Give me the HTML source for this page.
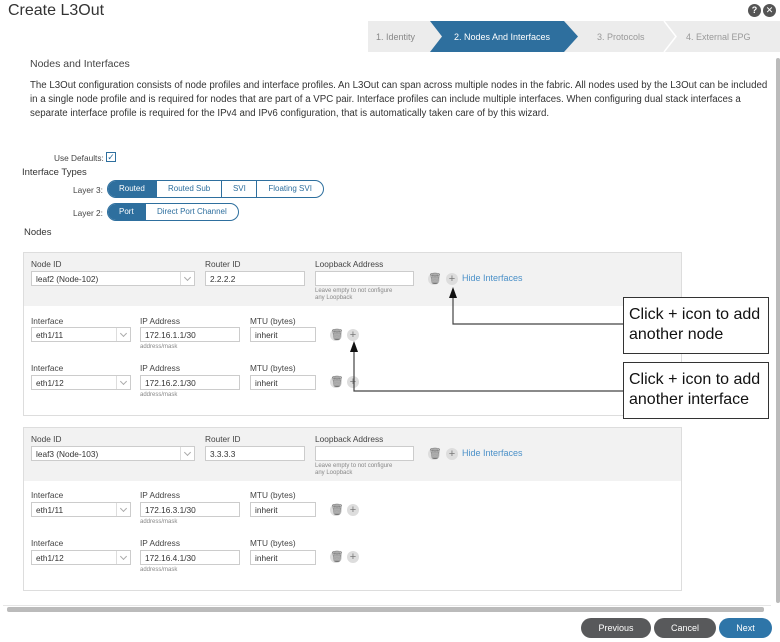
<!DOCTYPE html>
<html><head><meta charset="utf-8"><style>
*{box-sizing:border-box;margin:0;padding:0}
body{width:780px;height:642px;position:relative;background:#fff;font-family:"Liberation Sans",sans-serif;color:#333;overflow:hidden}
.a{position:absolute;white-space:nowrap}
.lbl{font-size:8.3px;color:#444}
.inp{position:absolute;height:15px;border:1px solid #ccc;background:#fff;font-size:8.3px;color:#333;padding:2px 4px;line-height:10px}
.sel:after{content:"";position:absolute;right:0;top:0;width:13px;height:13px;border-left:1px solid #ddd}
.chev{position:absolute;right:4px;top:3px;width:5px;height:5px;border-right:1px solid #aaa;border-bottom:1px solid #aaa;transform:rotate(45deg)}
.hint{font-size:6px;color:#888;line-height:7px}
.ic{position:absolute;width:12px;height:12px;border-radius:50%;background:#ddd;color:#777;font-size:11px;line-height:12px;text-align:center}
.pill{position:absolute;height:18px;border:1px solid #2e6f9e;border-radius:9px;overflow:hidden;display:flex;font-size:8px}
.pill span{border-right:1px solid #2e6f9e;color:#2e6f9e;line-height:16px;text-align:center}
.pill span:last-child{border-right:none}
.pill .on{background:#2e6f9e;color:#fff}
.call{position:absolute;border:1px solid #333;background:#fff;font-size:16px;line-height:20px;padding:7px 5px;color:#111}
.btn{position:absolute;top:618px;height:20px;border-radius:10px;color:#fff;font-size:9px;text-align:center;line-height:20px}
</style></head><body>
<div class="a" style="left:8px;top:2px;font-size:16px;color:#333">Create L3Out</div>
<div class="a" style="left:748px;top:4px;width:13px;height:13px;border-radius:50%;background:#555;color:#fff;font-size:9px;text-align:center;line-height:13px;font-weight:bold">?</div>
<div class="a" style="left:763px;top:4px;width:13px;height:13px;border-radius:50%;background:#555;color:#fff;font-size:9px;text-align:center;line-height:13px">✕</div>
<svg class="a" style="left:368px;top:21px" width="412" height="32">
<polygon points="0,0 412,0 412,31 0,31" fill="#ececec"/>
<polygon points="62,0 196,0 210,15.5 196,31 62,31 74,15.5" fill="#2e6f9e"/>
<polyline points="296,0 308,15.5 296,31" fill="none" stroke="#fff" stroke-width="1.5"/>
<text x="8" y="19" font-size="9" fill="#888" font-family="Liberation Sans">1. Identity</text>
<text x="86" y="19" font-size="9" fill="#fff" font-family="Liberation Sans">2. Nodes And Interfaces</text>
<text x="229" y="19" font-size="9" fill="#999" font-family="Liberation Sans">3. Protocols</text>
<text x="318" y="19" font-size="9" fill="#999" font-family="Liberation Sans">4. External EPG</text>
</svg>
<div class="a" style="left:30px;top:58px;font-size:10.5px;color:#444">Nodes and Interfaces</div>
<div class="a" style="left:30px;top:79px;font-size:9.7px;line-height:14px;color:#333">The L3Out configuration consists of node profiles and interface profiles. An L3Out can span across multiple nodes in the fabric. All nodes used by the L3Out can be included<br>in a single node profile and is required for nodes that are part of a VPC pair. Interface profiles can include multiple interfaces. When configuring dual stack interfaces a<br>separate interface profile is required for the IPv4 and IPv6 configuration, that is automatically taken care of by this wizard.</div>
<div class="a" style="left:776px;top:58px;width:4px;height:545px;background:#bbb;border-radius:2px"></div>
<div class="a lbl" style="left:54px;top:153px">Use Defaults:</div>
<div class="a" style="left:106px;top:152px;width:10px;height:10px;border:1px solid #2e6f9e;color:#2e6f9e;font-size:9px;line-height:8px;text-align:center">✓</div>
<div class="a" style="left:22px;top:167px;font-size:9.5px;color:#333">Interface Types</div>
<div class="a lbl" style="left:73px;top:185px">Layer 3:</div>
<div class="pill" style="left:107px;top:180px;width:217px"><span class="on" style="width:49px">Routed</span><span style="width:66px">Routed Sub</span><span style="width:35px">SVI</span><span style="width:66px">Floating SVI</span></div>
<div class="a lbl" style="left:73px;top:208px">Layer 2:</div>
<div class="pill" style="left:107px;top:203px;width:132px"><span class="on" style="width:38px">Port</span><span style="width:93px">Direct Port Channel</span></div>
<div class="a" style="left:24px;top:227px;font-size:9.5px;color:#333">Nodes</div>

<div class="a" style="left:23px;top:252px;width:659px;height:164px;border:1px solid #ddd"></div>
<div class="a" style="left:24px;top:253px;width:657px;height:53px;background:#f2f2f2"></div>
<div class="a lbl" style="left:31px;top:259px">Node ID</div>
<div class="inp sel" style="left:31px;top:271px;width:164px">leaf2 (Node-102)<i class="chev"></i></div>
<div class="a lbl" style="left:205px;top:259px">Router ID</div>
<div class="inp" style="left:205px;top:271px;width:100px">2.2.2.2</div>
<div class="a lbl" style="left:315px;top:259px">Loopback Address</div>
<div class="inp" style="left:315px;top:271px;width:99px"></div>
<div class="a hint" style="left:315px;top:288px">Leave empty to not configure<br>any Loopback</div>
<div class="ic" style="left:428px;top:273px">🗑</div>
<div class="ic" style="left:446px;top:273px">+</div>
<div class="a" style="left:462px;top:273px;font-size:9px;color:#4a90c8">Hide Interfaces</div>

<div class="a lbl" style="left:31px;top:316px">Interface</div>
<div class="inp sel" style="left:31px;top:327px;width:100px">eth1/11<i class="chev"></i></div>
<div class="a lbl" style="left:140px;top:316px">IP Address</div>
<div class="inp" style="left:140px;top:327px;width:100px">172.16.1.1/30</div>
<div class="a hint" style="left:140px;top:344px">address/mask</div>
<div class="a lbl" style="left:250px;top:316px">MTU (bytes)</div>
<div class="inp" style="left:250px;top:327px;width:66px">inherit</div>
<div class="ic" style="left:330px;top:329px">🗑</div>
<div class="ic" style="left:347px;top:329px">+</div>

<div class="a lbl" style="left:31px;top:363px">Interface</div>
<div class="inp sel" style="left:31px;top:375px;width:100px">eth1/12<i class="chev"></i></div>
<div class="a lbl" style="left:140px;top:363px">IP Address</div>
<div class="inp" style="left:140px;top:375px;width:100px">172.16.2.1/30</div>
<div class="a hint" style="left:140px;top:392px">address/mask</div>
<div class="a lbl" style="left:250px;top:363px">MTU (bytes)</div>
<div class="inp" style="left:250px;top:375px;width:66px">inherit</div>
<div class="ic" style="left:330px;top:376px">🗑</div>
<div class="ic" style="left:347px;top:376px">+</div>

<div class="a" style="left:23px;top:427px;width:659px;height:164px;border:1px solid #ddd"></div>
<div class="a" style="left:24px;top:428px;width:657px;height:53px;background:#f2f2f2"></div>
<div class="a lbl" style="left:31px;top:434px">Node ID</div>
<div class="inp sel" style="left:31px;top:446px;width:164px">leaf3 (Node-103)<i class="chev"></i></div>
<div class="a lbl" style="left:205px;top:434px">Router ID</div>
<div class="inp" style="left:205px;top:446px;width:100px">3.3.3.3</div>
<div class="a lbl" style="left:315px;top:434px">Loopback Address</div>
<div class="inp" style="left:315px;top:446px;width:99px"></div>
<div class="a hint" style="left:315px;top:463px">Leave empty to not configure<br>any Loopback</div>
<div class="ic" style="left:428px;top:448px">🗑</div>
<div class="ic" style="left:446px;top:448px">+</div>
<div class="a" style="left:462px;top:448px;font-size:9px;color:#4a90c8">Hide Interfaces</div>

<div class="a lbl" style="left:31px;top:490px">Interface</div>
<div class="inp sel" style="left:31px;top:502px;width:100px">eth1/11<i class="chev"></i></div>
<div class="a lbl" style="left:140px;top:490px">IP Address</div>
<div class="inp" style="left:140px;top:502px;width:100px">172.16.3.1/30</div>
<div class="a hint" style="left:140px;top:519px">address/mask</div>
<div class="a lbl" style="left:250px;top:490px">MTU (bytes)</div>
<div class="inp" style="left:250px;top:502px;width:66px">inherit</div>
<div class="ic" style="left:330px;top:504px">🗑</div>
<div class="ic" style="left:347px;top:504px">+</div>

<div class="a lbl" style="left:31px;top:538px">Interface</div>
<div class="inp sel" style="left:31px;top:550px;width:100px">eth1/12<i class="chev"></i></div>
<div class="a lbl" style="left:140px;top:538px">IP Address</div>
<div class="inp" style="left:140px;top:550px;width:100px">172.16.4.1/30</div>
<div class="a hint" style="left:140px;top:567px">address/mask</div>
<div class="a lbl" style="left:250px;top:538px">MTU (bytes)</div>
<div class="inp" style="left:250px;top:550px;width:66px">inherit</div>
<div class="ic" style="left:330px;top:551px">🗑</div>
<div class="ic" style="left:347px;top:551px">+</div>

<svg class="a" style="left:0;top:0" width="780" height="642">
<polyline points="453,296 453,324 624,324" fill="none" stroke="#444" stroke-width="1.2"/>
<polygon points="453,287 449,298 457,298" fill="#111"/>
<polyline points="354,349 354,391 624,391" fill="none" stroke="#444" stroke-width="1.2"/>
<polygon points="354,341 350,352 358,352" fill="#111"/>
</svg>
<div class="call" style="left:623px;top:297px;width:146px;height:57px">Click + icon to add<br>another node</div>
<div class="call" style="left:623px;top:362px;width:146px;height:57px">Click + icon to add<br>another interface</div>

<div class="a" style="left:3px;top:605px;width:768px;height:1px;background:#e6e6e6"></div>
<div class="a" style="left:7px;top:607px;width:757px;height:5px;background:#bbb;border-radius:2px"></div>
<div class="btn" style="left:581px;width:70px;background:#58595b">Previous</div>
<div class="btn" style="left:654px;width:62px;background:#58595b">Cancel</div>
<div class="btn" style="left:719px;width:53px;background:#2e75a8">Next</div>
</body></html>
